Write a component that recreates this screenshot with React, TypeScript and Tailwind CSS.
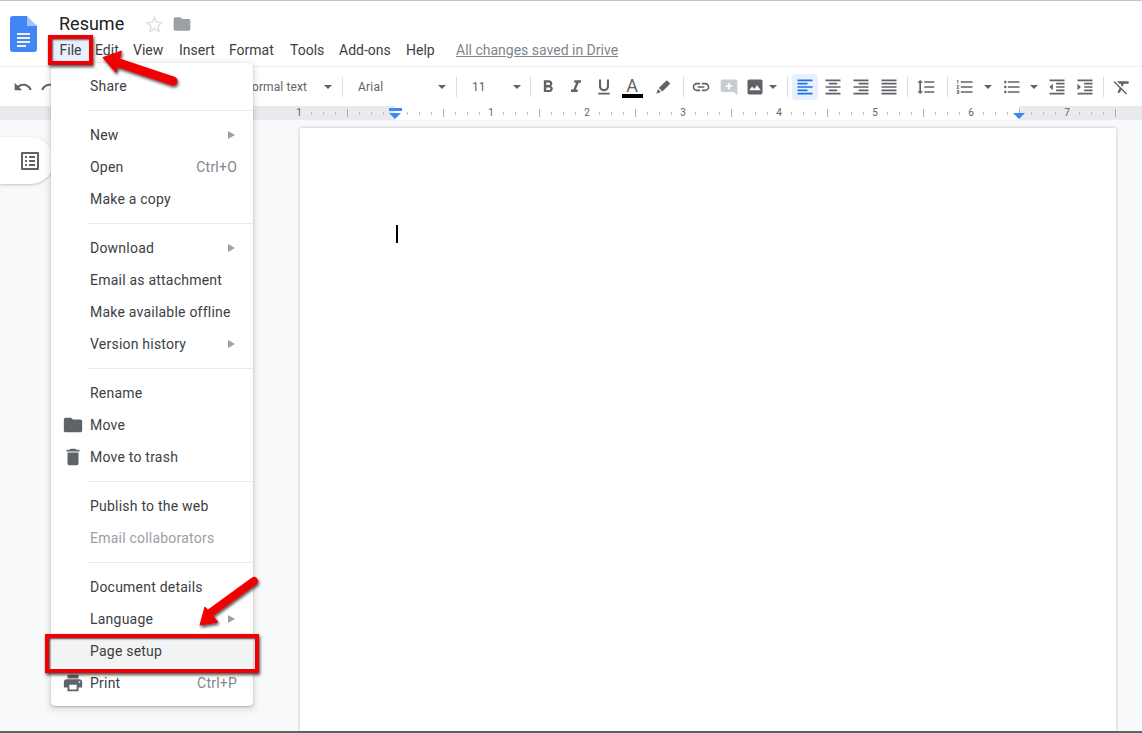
import type { ReactNode } from 'react';

const P = {
  undo: 'M12.5 8c-2.65 0-5.05.99-6.9 2.6L2 7v9h9l-3.62-3.62c1.39-1.16 3.16-1.88 5.12-1.88 3.54 0 6.55 2.31 7.6 5.5l2.37-.78C21.08 11.03 17.15 8 12.5 8z',
  bold: 'M15.6 10.79c.97-.67 1.65-1.77 1.65-2.79 0-2.26-1.75-4-4-4H7v14h7.04c2.09 0 3.71-1.7 3.71-3.79 0-1.52-.86-2.82-2.15-3.42zM10 6.5h3c.83 0 1.5.67 1.5 1.5s-.67 1.5-1.5 1.5h-3v-3zm3.5 9H10v-3h3.5c.83 0 1.5.67 1.5 1.5s-.67 1.5-1.5 1.5z',
  italic: 'M10 4v3h2.21l-3.42 8H6v3h8v-3h-2.21l3.42-8H18V4z',
  underline: 'M12 17c3.31 0 6-2.69 6-6V3h-2.5v8c0 1.93-1.57 3.5-3.5 3.5S8.5 12.93 8.5 11V3H6v8c0 3.31 2.69 6 6 6zm-7 2v2h14v-2H5z',
  link: 'M3.9 12c0-1.71 1.39-3.1 3.1-3.1h4V7H7c-2.76 0-5 2.24-5 5s2.24 5 5 5h4v-1.9H7c-1.71 0-3.1-1.39-3.1-3.1zM8 13h8v-2H8v2zm9-6h-4v1.9h4c1.71 0 3.1 1.39 3.1 3.1s-1.39 3.1-3.1 3.1h-4V17h4c2.76 0 5-2.24 5-5s-2.24-5-5-5z',
  highlight: 'M4 20l2-5.5 3.5 3.5L4 20zM7 13.2L15.5 4.7a1.5 1.5 0 012.1 0l2.2 2.2a1.5 1.5 0 010 2.1L11.3 17.5 7 13.2z',
  comment: 'M4 3h16c1.1 0 2 .9 2 2v17l-4-4H4c-1.1 0-2-.9-2-2V5c0-1.1.9-2 2-2zm7 4v3H8v2h3v3h2v-3h3v-2h-3V7h-2z',
  image: 'M21 19V5c0-1.1-.9-2-2-2H5c-1.1 0-2 .9-2 2v14c0 1.1.9 2 2 2h14c1.1 0 2-.9 2-2zM8.5 11.5l2.5 3.01L14.5 10l4.5 6H5l3.5-4.5z',
  alignLeft: 'M3 3h18v2H3zM3 7h12v2H3zM3 11h18v2H3zM3 15h12v2H3zM3 19h18v2H3z',
  alignCenter: 'M3 3h18v2H3zM7 7h10v2H7zM3 11h18v2H3zM7 15h10v2H7zM3 19h18v2H3z',
  alignRight: 'M3 3h18v2H3zM9 7h12v2H9zM3 11h18v2H3zM9 15h12v2H9zM3 19h18v2H3z',
  justify: 'M3 3h18v2H3zM3 7h18v2H3zM3 11h18v2H3zM3 15h18v2H3zM3 19h18v2H3z',
  spacing: 'M6 7h2.5L5 3.5 1.5 7H4v10H1.5L5 20.5 8.5 17H6V7zm4-2v2h12V5H10zm0 14h12v-2H10v2zm0-6h12v-2H10v2z',
  numbered: 'M2 17h2v.5H3v1h1v.5H2v1h3v-4H2v1zm1-9h1V4H2v1h1v3zm-1 3h1.8L2 13.1v.9h3v-1H3.2L5 10.9V10H2v1zm5-6v2h14V5H7zm0 14h14v-2H7v2zm0-6h14v-2H7v2z',
  bullets: 'M4 10.5c-.83 0-1.5.67-1.5 1.5s.67 1.5 1.5 1.5 1.5-.67 1.5-1.5-.67-1.5-1.5-1.5zm0-6c-.83 0-1.5.67-1.5 1.5S3.17 7.5 4 7.5 5.5 6.83 5.5 6 4.83 4.5 4 4.5zm0 12c-.83 0-1.5.68-1.5 1.5s.68 1.5 1.5 1.5 1.5-.68 1.5-1.5-.67-1.5-1.5-1.5zM7 19h14v-2H7v2zm0-6h14v-2H7v2zm0-8v2h14V5H7z',
  outdent: 'M11 17h10v-2H11v2zm-8-5l4 4V8l-4 4zm0 9h18v-2H3v2zM3 3v2h18V3H3zm8 6h10V7H11v2zm0 4h10v-2H11v2z',
  indent: 'M3 21h18v-2H3v2zM3 8v8l4-4-4-4zm8 9h10v-2H11v2zM3 3v2h18V3H3zm8 6h10V7H11v2zm0 4h10v-2H11v2z',
  clear: 'M3.27 5L2 6.27l6.97 6.97L6.5 19h3l1.57-3.66L16.73 21 18 19.73 3.55 5.27 3.27 5zM6 5v.18L8.82 8h2.4l-.72 1.68 2.1 2.1L14.21 8H20V5H6z',
  folder: 'M10 4H4c-1.1 0-1.99.9-1.99 2L2 18c0 1.1.9 2 2 2h16c1.1 0 2-.9 2-2V8c0-1.1-.9-2-2-2h-8l-2-2z',
  trash: 'M6 19c0 1.1.9 2 2 2h8c1.1 0 2-.9 2-2V7H6v12zM19 4h-3.5l-1-1h-5l-1 1H5v2h14V4z',
  print: 'M19 8H5c-1.66 0-3 1.34-3 3v6h4v4h12v-4h4v-6c0-1.66-1.34-3-3-3zm-3 11H8v-5h8v5zm3-7c-.55 0-1-.45-1-1s.45-1 1-1 1 .45 1 1-.45 1-1 1zm-1-9H6v4h12V3z',
  outline: 'M19 5v14H5V5h14m1.1-2H3.9c-.5 0-.9.4-.9.9v16.2c0 .4.4.9.9.9h16.2c.4 0 .9-.5.9-.9V3.9c0-.5-.5-.9-.9-.9zM11 7h6v2h-6V7zm0 4h6v2h-6v-2zm0 4h6v2h-6zM7 7h2v2H7zm0 4h2v2H7zm0 4h2v2H7z',
};

const Icon = ({ d, className = 'w-[20px] h-[20px] text-[#5f6368]' }: { d: string; className?: string }) => (
  <svg viewBox="0 0 24 24" className={className} fill="currentColor">
    <path d={d} />
  </svg>
);

const Caret = () => <span className="w-0 h-0 border-x-[4px] border-x-transparent border-t-[4px] border-t-[#5f6368]" />;

const Sep = ({ w }: { w: number }) => (
  <span className="flex justify-center items-center shrink-0" style={{ width: w }}>
    <span className="w-px h-5 bg-[#dadce0]" />
  </span>
);

const Tool = ({ w, children, active }: { w: number; children?: ReactNode; active?: boolean }) => (
  <span
    className={`flex items-center justify-center shrink-0 h-[26px] rounded-sm ${active ? 'bg-[#e8f0fe]' : ''}`}
    style={{ width: w }}
  >
    {children}
  </span>
);

const menuBar = [
  ['File', 'w-[40px]'],
  ['Edit', 'w-[38px]'],
  ['View', 'w-[46px]'],
  ['Insert', 'w-[50px]'],
  ['Format', 'w-[61px]'],
  ['Tools', 'w-[49px]'],
  ['Add-ons', 'w-[67px]'],
  ['Help', 'w-[50px]'],
];

type Item = { label?: string; sep?: boolean; icon?: string; sub?: boolean; key?: string; off?: boolean; hover?: boolean };

const menuItems: Item[] = [
  { label: 'Share' },
  { sep: true },
  { label: 'New', sub: true },
  { label: 'Open', key: 'Ctrl+O' },
  { label: 'Make a copy' },
  { sep: true },
  { label: 'Download', sub: true },
  { label: 'Email as attachment' },
  { label: 'Make available offline' },
  { label: 'Version history', sub: true },
  { sep: true },
  { label: 'Rename' },
  { label: 'Move', icon: P.folder },
  { label: 'Move to trash', icon: P.trash },
  { sep: true },
  { label: 'Publish to the web' },
  { label: 'Email collaborators', off: true },
  { sep: true },
  { label: 'Document details' },
  { label: 'Language', sub: true },
  { label: 'Page setup', hover: true },
  { label: 'Print', key: 'Ctrl+P', icon: P.print },
];

const Ruler = () => {
  const ticks = [];
  for (let i = -8; i <= 60; i++) {
    const x = 395 + i * 12;
    if (i % 8 === 0) continue;
    const half = i % 4 === 0;
    ticks.push(
      <line key={i} x1={x + 0.5} x2={x + 0.5} y1={half ? 3 : 6} y2={half ? 11 : 9} stroke={half ? '#a8abaf' : '#bdc1c6'} strokeWidth="1" />
    );
  }
  return (
    <svg viewBox="0 0 1142 14" className="w-[1142px] h-[14px] block">
      {ticks}
    </svg>
  );
};

const RulerNumbers = [
  [299, '1'], [491, '1'], [587, '2'], [683, '3'], [779, '4'], [875, '5'], [971, '6'], [1067, '7'],
] as const;

export default function App() {
  return (
    <div className="relative w-[1142px] h-[733px] overflow-hidden bg-[#f8f9fa] flex flex-col font-['Roboto',sans-serif] text-[#3c4043]">
      {/* Header */}
      <div className="h-[66px] bg-white border-t border-t-[#c4c4c4] flex shrink-0">
        <div className="pl-[10px] pt-[15px] w-[55px] shrink-0">
          <svg viewBox="0 0 27 36" className="w-[27px] h-[36px]">
            <path d="M17 0H3a3 3 0 00-3 3v30a3 3 0 003 3h21a3 3 0 003-3V10l-7-3z" fill="#4285f4" />
            <path d="M17 0v10h10z" fill="#a1c2fa" />
            <path d="M7 17h13v2H7zM7 21h13v2H7zM7 25h13v2H7zM7 29h9v2H7z" fill="#f1f1f1" />
          </svg>
        </div>
        <div className="flex flex-col">
          <div className="flex items-center h-[28px] mt-[9px] pl-[4px]">
            <span className="text-[18px] text-[#202124] leading-none w-[68px]">Resume</span>
            <svg viewBox="0 0 24 24" className="w-[19px] h-[19px] ml-[18px]" fill="none" stroke="#dadce0" strokeWidth="1.6">
              <path d="M12 3l2.7 6.1 6.6.7-5 4.4 1.5 6.5L12 17.3 6.2 20.7l1.5-6.5-5-4.4 6.6-.7z" />
            </svg>
            <Icon d={P.folder} className="w-[20px] h-[20px] ml-[8px] text-[#9aa0a6]" />
          </div>
          <div className="flex items-center h-[24px] text-[14px]">
            {menuBar.map(([name, w], i) => (
              <span key={name} className={`${w} shrink-0 ${i === 0 ? 'pl-[3px]' : ''}`}>
                {name}
              </span>
            ))}
            <span className="text-[#80868b] underline">All changes saved in Drive</span>
          </div>
        </div>
      </div>

      {/* Toolbar */}
      <div className="h-[40px] bg-white border-t border-t-[#eeeeee] flex items-center pl-[10px] shrink-0 text-[12px] text-[#5f6368]">
        <Tool w={26}><Icon d={P.undo} /></Tool>
        <Tool w={28}><Icon d={P.undo} className="w-[20px] h-[20px] text-[#5f6368] -scale-x-100" /></Tool>
        <Tool w={188} />
        <span className="w-[67px] shrink-0 tracking-[0.1px]">ormal text</span>
        <Tool w={18}><Caret /></Tool>
        <Sep w={10} />
        <span className="w-[86px] pl-[11px] shrink-0 tracking-[0.2px]">Arial</span>
        <Tool w={18}><Caret /></Tool>
        <Sep w={10} />
        <span className="w-[47px] pl-[11px] shrink-0">11</span>
        <Tool w={18}><Caret /></Tool>
        <Sep w={8} />
        <Tool w={28}><Icon d={P.bold} /></Tool>
        <Tool w={28}><Icon d={P.italic} /></Tool>
        <Tool w={28}><Icon d={P.underline} /></Tool>
        <Tool w={28}>
          <span className="flex flex-col items-center mt-[2px]">
            <span className="text-[18px] leading-[15px]">A</span>
            <span className="w-[21px] h-[4px] bg-black mt-[1px]" />
          </span>
        </Tool>
        <Tool w={34}><Icon d={P.highlight} /></Tool>
        <Sep w={6} />
        <Tool w={30}><Icon d={P.link} /></Tool>
        <Tool w={26}><Icon d={P.comment} className="w-[20px] h-[20px] text-[#c9cccf]" /></Tool>
        <Tool w={26}><Icon d={P.image} /></Tool>
        <Tool w={10}><Caret /></Tool>
        <Tool w={4} />
        <Sep w={10} />
        <Tool w={26} active><Icon d={P.alignLeft} className="w-[20px] h-[20px] text-[#1a73e8]" /></Tool>
        <Tool w={30}><Icon d={P.alignCenter} /></Tool>
        <Tool w={26}><Icon d={P.alignRight} /></Tool>
        <Tool w={30}><Icon d={P.justify} /></Tool>
        <Sep w={6} />
        <Tool w={32}><Icon d={P.spacing} /></Tool>
        <Sep w={10} />
        <Tool w={26}><Icon d={P.numbered} /></Tool>
        <Tool w={20}><Caret /></Tool>
        <Tool w={28}><Icon d={P.bullets} /></Tool>
        <Tool w={16}><Caret /></Tool>
        <Tool w={30}><Icon d={P.outdent} /></Tool>
        <Tool w={26}><Icon d={P.indent} /></Tool>
        <Sep w={10} />
        <Tool w={28}><Icon d={P.clear} /></Tool>
      </div>

      {/* Ruler */}
      <div className="relative h-[14px] shrink-0 bg-[#e8eaed] overflow-hidden">
        <div className="absolute left-[395px] w-[624px] top-0 h-full bg-white" />
        <div className="absolute inset-0"><Ruler /></div>
        {RulerNumbers.map(([x, n]) => (
          <span key={x} className="absolute top-0 text-[10px] leading-[14px] text-[#5f6368] -translate-x-1/2" style={{ left: x }}>
            {n}
          </span>
        ))}
        <span className="absolute left-[389px] top-[2px] w-[13px] h-[3px] bg-[#4285f4]" />
        <span className="absolute left-[389px] top-[7px] w-0 h-0 border-x-[6px] border-x-transparent border-t-[6px] border-t-[#4285f4]" />
        <span className="absolute left-[1013px] top-[7px] w-0 h-0 border-x-[6px] border-x-transparent border-t-[6px] border-t-[#4285f4]" />
      </div>

      {/* Body */}
      <div className="flex flex-1 min-h-0 border-b-2 border-b-[#5f6368]">
        <div className="w-[300px] shrink-0">
          <div className="mt-[17px] w-[54px] h-[47px] bg-white rounded-r-[24px] shadow-[0_1px_3px_rgba(60,64,67,0.3)] pl-[18px] flex items-center">
            <Icon d={P.outline} className="w-[24px] h-[24px] text-[#5f6368]" />
          </div>
        </div>
        <div className="w-[816px] mt-[8px] bg-white shadow-[0_0_3px_rgba(60,64,67,0.35)]">
          <span className="block w-[2px] h-[18px] bg-black ml-[96px] mt-[97px]" />
        </div>
      </div>

      {/* File menu */}
      <div className="absolute left-[51px] top-[63px] w-[202px] h-[643px] bg-white rounded-[4px] shadow-[0_2px_6px_2px_rgba(60,64,67,0.15),0_1px_2px_rgba(60,64,67,0.3)] pt-[7px] text-[14px] tracking-[0.22px]">
        {menuItems.map((m, i) =>
          m.sep ? (
            <div key={i} className="h-px bg-[#e8eaed] my-[8px] ml-[37px] mr-0" />
          ) : (
            <div key={i} className={`relative h-[32px] flex items-center pl-[39px] pr-[16px] ${m.hover ? 'bg-[#f1f3f4]' : ''} ${m.off ? 'text-[#9aa0a6]' : ''}`}>
              {m.icon && <Icon d={m.icon} className="absolute left-[11px] w-[22px] h-[22px] text-[#5f6368]" />}
              <span className="flex-1">{m.label}</span>
              {m.key && <span className="text-[#80868b]">{m.key}</span>}
              {m.sub && <span className="w-0 h-0 mr-[2px] border-y-[4px] border-y-transparent border-l-[7px] border-l-[#9aa0a6]" />}
            </div>
          )
        )}
      </div>

      {/* File highlight and callouts */}
      <div className="absolute left-[48px] top-[35px] w-[45px] h-[30px] border-[4px] border-[#f00000] shadow-[1px_2px_3px_rgba(0,0,0,0.7),inset_1px_1px_2px_rgba(0,0,0,0.6)] flex items-center justify-center bg-[#e8f0fe] text-[14px]">
        File
      </div>
      <div className="absolute left-[45px] top-[634px] w-[214px] h-[39px] border-[4px] border-[#f00000] shadow-[1px_2px_3px_rgba(0,0,0,0.7),inset_1px_1px_2px_rgba(0,0,0,0.7)]" />
      <svg className="absolute left-0 top-0 w-[300px] h-[733px] pointer-events-none" viewBox="0 0 300 733">
        <defs>
          <filter id="arrowShadow" x="-20%" y="-20%" width="140%" height="140%">
            <feDropShadow dx="1" dy="2" stdDeviation="1.5" floodColor="#000" floodOpacity="0.7" />
          </filter>
        </defs>
        <g filter="url(#arrowShadow)" fill="#f00000" stroke="#f00000" strokeLinejoin="round">
          <path d="M103 57.5L121.5 51L116 72.5Z" strokeWidth="1" />
          <line x1="116" y1="62" x2="173" y2="81" strokeWidth="9" strokeLinecap="round" />
          <path d="M200 625L205 607L218 622Z" strokeWidth="1" />
          <line x1="210" y1="613" x2="254" y2="581" strokeWidth="8" strokeLinecap="round" />
        </g>
      </svg>
    </div>
  );
}
